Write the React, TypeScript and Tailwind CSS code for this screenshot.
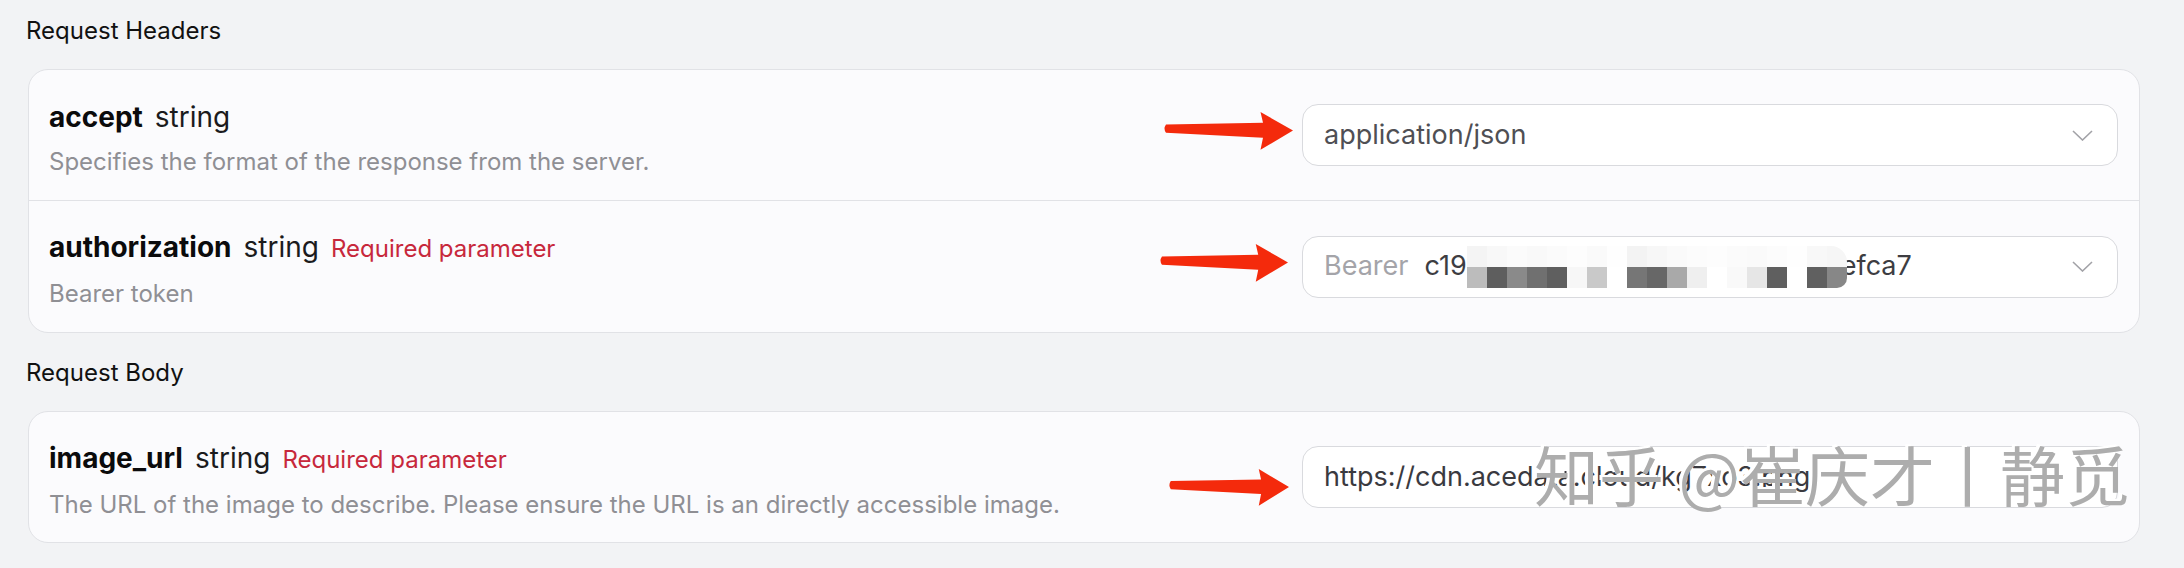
import React from "react";

const FONT = "font-['Inter','Noto_Sans',sans-serif]";

function Arrow({ w, h, className }: { w: number; h: number; className: string }) {
  return (
    <svg
      width={w}
      height={h}
      viewBox="0 0 130 38"
      preserveAspectRatio="none"
      className={className}
    >
      <path
        d="M3,12.4 L100,10.8 L97.5,0 L130,18.5 L97.5,37.8 L100,25.8 L3,20.8 Q0,16.6 3,12.4 Z"
        fill="#f42a0c"
      />
    </svg>
  );
}

function Chevron() {
  return (
    <svg width="21" height="11" viewBox="0 0 21 11" className="shrink-0">
      <path d="M1 1 L10.5 10 L20 1" fill="none" stroke="#a2a2a7" strokeWidth="1.6" />
    </svg>
  );
}

const lower = [
  "#bcbcbc", "#5e5e5e", "#8a8a8a", "#707070", "#5f5f5f", "#f7f7f7", "#c9c9c9", "#ffffff",
  "#767676", "#676767", "#a9a9a9", "#efefef", "#ffffff", "#f9f9f9", "#e6e6e6", "#5f5f5f",
  "#ffffff", "#606060", "#878787",
];
const upper = [
  "#f4f4f4", "#f8f8f8", "#fbfbfb", "#f9f9f9", "#fbfbfb", "#fdfdfd", "#fafafa", "#fefefe",
  "#f3f3f3", "#f7f7f7", "#fafafa", "#fcfcfc", "#fdfdfd", "#fbfbfb", "#fafafa", "#fcfcfc",
  "#fefefe", "#f8f8f8", "#f6f6f6",
];

function Mosaic() {
  return (
    <span className="relative z-10 -mr-[6px] inline-flex flex-col overflow-hidden rounded-tr-[16px] rounded-br-[10px]">
      <span className="flex h-[21px]">
        {upper.map((c, i) => (
          <span key={i} className="h-full w-[20px]" style={{ backgroundColor: c }} />
        ))}
      </span>
      <span className="flex h-[21px]">
        {lower.map((c, i) => (
          <span key={i} className="h-full w-[20px]" style={{ backgroundColor: c }} />
        ))}
      </span>
    </span>
  );
}

function ParamText({
  name,
  required,
  desc,
}: {
  name: string;
  required?: boolean;
  desc: string;
}) {
  return (
    <div className="flex flex-col pt-[6px]">
      <div className="flex items-baseline gap-[12px] leading-[36px]">
        <span className="text-[28px] font-bold text-[#0b0b0c]">{name}</span>
        <span className="text-[28px] text-[#1b1b1d]">string</span>
        {required && (
          <span className="text-[24px] text-[#c7283c]">Required parameter</span>
        )}
      </div>
      <div className="mt-[11px] text-[24px] leading-[32px] text-[#8f8f94]">{desc}</div>
    </div>
  );
}

function Field({ children, chevron = true }: { children: React.ReactNode; chevron?: boolean }) {
  return (
    <div className="flex h-[62px] w-[816px] shrink-0 items-center justify-between rounded-[16px] border border-[#d9dade] bg-white pl-[21px] pr-[24px]">
      <div className="flex items-center whitespace-nowrap text-[27px]">{children}</div>
      {chevron && <Chevron />}
    </div>
  );
}

export default function App() {
  return (
    <div className={`${FONT} relative h-[568px] w-[2184px] overflow-hidden bg-[#f2f3f5] pb-[25px] pl-[28px] pr-[44px] pt-[15px]`}>
      <div className="-ml-[2px] text-[24px] leading-[32px] text-[#111]">Request Headers</div>

      <div className="mt-[22px] rounded-[20px] border border-[#e1e2e6] bg-[#fbfbfd]">
        <div className="relative flex h-[131px] items-center justify-between border-b border-[#e1e2e6] pl-[20px] pr-[21px]">
          <ParamText name="accept" desc="Specifies the format of the response from the server." />
          <Field>
            <span className="text-[#4f4f54]">application/json</span>
          </Field>
          <Arrow w={130} h={38} className="absolute left-[1134px] top-[42px]" />
        </div>
        <div className="relative flex h-[131px] items-center justify-between pl-[20px] pr-[21px]">
          <ParamText name="authorization" required desc="Bearer token" />
          <Field>
            <span className="text-[#a4a4a9]">Bearer</span>
            <span className="ml-[16px] text-[#3d3d42]">c19</span>
            <Mosaic />
            <span className="text-[#3d3d42]">efca7</span>
          </Field>
          <Arrow w={129} h={38} className="absolute left-[1130px] top-[43px]" />
        </div>
      </div>

      <div className="mt-[24px] -ml-[2px] text-[24px] leading-[32px] text-[#111]">Request Body</div>

      <div className="mt-[22px] rounded-[20px] border border-[#e1e2e6] bg-[#fbfbfd]">
        <div className="relative flex h-[130px] items-center justify-between pl-[20px] pr-[21px]">
          <ParamText
            name="image_url"
            required
            desc="The URL of the image to describe. Please ensure the URL is an directly accessible image."
          />
          <Field chevron={false}>
            <span className="text-[#3a3a3f]">https://cdn.acedata.cloud/kg7xo3.png</span>
          </Field>
          <Arrow w={121} h={37} className="absolute left-[1139px] top-[57px]" />
          <div className="pointer-events-none absolute left-[1505px] top-[29px] whitespace-nowrap font-['Noto_Sans_CJK_SC',sans-serif] text-[65px] leading-none text-[#adadad] [text-shadow:-3px_-2px_0_#ffffff]">
            知乎 @崔庆才丨静觅
          </div>
        </div>
      </div>
    </div>
  );
}
